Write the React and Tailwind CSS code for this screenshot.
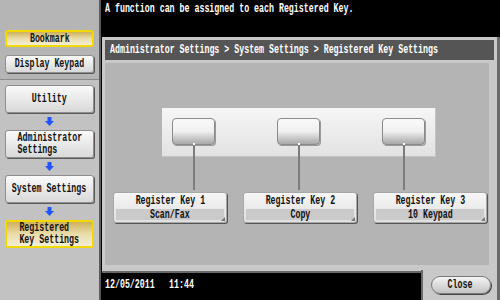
const mono = "font-['Liberation_Mono','DejaVu_Sans_Mono',monospace] text-[12px] font-bold";

// condensed text: the panel font is narrow and tall, so squeeze a mono face
const T = ({ children, left }) => (
  <span className={`inline-block whitespace-pre scale-x-[0.69] ${left ? "origin-left" : "origin-center"}`}>
    {children}
  </span>
);

const Arrow = () => (
  <div className="h-[17px] flex items-center justify-center">
    <svg width="9" height="9" viewBox="0 0 9 9">
      <rect x="2.5" y="0" width="4" height="4" fill="#1f55ff" />
      <polygon points="0,4 9,4 4.5,9" fill="#1f55ff" />
    </svg>
  </div>
);

const SideButton = ({ children, active, className = "" }) => (
  <div
    className={`mx-[5px] flex items-center justify-center text-center leading-[12px] text-[#111] rounded-[3px] ${
      active
        ? "border-2 border-[#f2d900] bg-gradient-to-b from-[#cdb05a] via-[#eadcaa] to-[#f4eed4]"
        : "border border-[#8e8e8e] bg-gradient-to-b from-[#fafafa] to-[#d9d9d9] shadow-[1px_1px_0_#5a5a5a]"
    } ${className}`}
  >
    {children}
  </div>
);

const SmallKey = () => (
  <div className="flex flex-col items-center w-[43px] shrink-0">
    <div className="w-[43px] h-[27px] shrink-0 rounded-[4px] border border-[#8a8a8a] bg-gradient-to-b from-[#fafafa] via-[#f0f0f0] to-[#a8a8a8] shadow-[1px_1px_0_#9a9a9a]" />
    <div className="w-[2px] h-[47px] shrink-0 -mt-[2px] bg-[#7c7c7c] border-t-2 border-white" />
  </div>
);

const RegKey = ({ title, value }) => (
  <div className="relative w-[114px] h-[31px] rounded-[3px] border border-[#a8a8a8] bg-gradient-to-b from-[#f6f6f6] to-[#e0e0e0] shadow-[1px_1px_0_#555] flex flex-col items-center px-[2px]">
    <div className="h-[16px] flex items-center leading-[12px] text-[#111]">
      <T>{title}</T>
    </div>
    <div className="w-full h-[11px] bg-[#cacaca] flex items-center justify-center leading-[12px] text-[#111]">
      <T>{value}</T>
    </div>
    <div className="absolute right-[1px] bottom-[1px] w-0 h-0 border-l-[4px] border-l-transparent border-b-[4px] border-b-[#777]" />
  </div>
);

export default function App() {
  return (
    <div className={`w-[500px] h-[300px] flex overflow-hidden ${mono}`}>
      {/* sidebar */}
      <div className="w-[101px] shrink-0 h-full flex flex-col bg-[#c2c2c2] border-r-2 border-[#5a5a5a]">
        <div className="h-[80px] bg-[#b5b5b5] border-b border-[#8a8a8a] pt-[30px] flex flex-col gap-[8px]">
          <SideButton active className="h-[17px]"><T>Bookmark</T></SideButton>
          <SideButton className="h-[18px]"><T>Display Keypad</T></SideButton>
        </div>
        <div className="pt-[5px] flex flex-col">
          <SideButton className="h-[28px]"><T>Utility</T></SideButton>
          <Arrow />
          <SideButton className="h-[28px] flex-col">
            <T>{"Administrator"}</T>
            <T>{"Settings     "}</T>
          </SideButton>
          <Arrow />
          <SideButton className="h-[28px]"><T>System Settings</T></SideButton>
          <Arrow />
          <SideButton active className="h-[28px] flex-col">
            <T>{"Registered  "}</T>
            <T>{"Key Settings"}</T>
          </SideButton>
        </div>
      </div>

      {/* main */}
      <div className="flex-1 min-w-0 h-full bg-black flex flex-col">
        <div className="h-[37px] pt-[3px] pl-[4px] leading-[13px] text-white overflow-hidden">
          <T left>A function can be assigned to each Registered Key.</T>
        </div>
        <div className="h-[236px] ml-[1px] bg-[#c9c9c9] border-r-[3px] border-b-2 border-[#6a6a6a] pt-[3px] pl-[3px] pr-[8px] pb-[6px] flex flex-col gap-[3px]">
          <div className="h-[20px] bg-[#555] text-white flex items-center pl-[5px] mr-[-5px] leading-[12px] overflow-hidden">
            <T left>Administrator Settings &gt; System Settings &gt; Registered Key Settings</T>
          </div>
          <div className="flex-1 bg-[#b4b4b4] flex flex-col">
            <div className="ml-[57px] mt-[45px] w-[274px] h-[49px] bg-gradient-to-b from-[#f6f6f6] to-[#e2e2e2] border-r border-b border-[#c4c4c4] flex gap-[62px] pl-[10px] pt-[10px]">
              <SmallKey />
              <SmallKey />
              <SmallKey />
            </div>
            <div className="mt-[35px] pl-[8px] flex gap-[16px]">
              <RegKey title="Register Key 1" value="Scan/Fax" />
              <RegKey title="Register Key 2" value="Copy" />
              <RegKey title="Register Key 3" value="10 Keypad" />
            </div>
          </div>
        </div>
        <div className="flex-1 flex">
          <div className="flex-1 min-w-0 flex items-center pl-[4px] gap-[16px] text-white leading-[13px] pb-[3px]">
            <span className="w-[48px]"><T left>12/05/2011</T></span>
            <T left>11:44</T>
          </div>
          <div className="w-[79px] shrink-0 mt-[-3px] bg-[#c9c9c9] border-l-2 border-[#6a6a6a] border-r-[3px] border-r-[#6a6a6a] flex items-center justify-center pl-[1px] pb-[1px]">
            <div className="w-[60px] h-[18px] rounded-full border border-[#7a7a7a] bg-gradient-to-b from-[#f4f4f4] to-[#c4c4c4] shadow-[1px_1px_0_#444] flex items-center justify-center text-[#111] leading-[12px]">
              <T>Close</T>
            </div>
          </div>
        </div>
      </div>
    </div>
  );
}
